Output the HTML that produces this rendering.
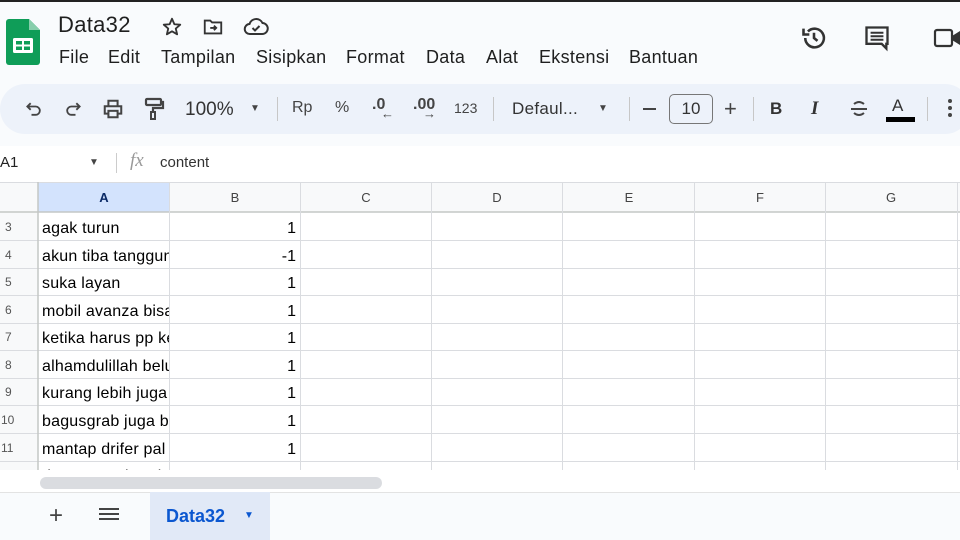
<!DOCTYPE html>
<html><head><meta charset="utf-8"><style>
*{margin:0;padding:0;box-sizing:border-box}
body{width:960px;height:540px;overflow:hidden;background:#f9fbfd;font-family:"Liberation Sans",Arial,sans-serif;position:relative;color:#1f1f1f}
.a{position:absolute;white-space:nowrap}
.m{position:absolute;top:47px;font-size:18px;color:#1f1f1f;letter-spacing:0.3px}
.tb{position:absolute;top:84px;left:0;width:970px;height:50px;background:#edf2fa;border-radius:25px}
.sep{position:absolute;top:97px;width:1px;height:24px;background:#c7c7c7}
.grid{position:absolute;left:0;top:182px;width:960px;height:288px;background:#fff;overflow:hidden}
</style></head><body>
<div class="a" style="left:0;top:0;width:960px;height:2px;background:#222"></div>
<svg class="a" style="left:6px;top:19px" width="34" height="46" viewBox="0 0 34 46"><path d="M3 0h20l11 11v32a3 3 0 0 1-3 3H3a3 3 0 0 1-3-3V3a3 3 0 0 1 3-3z" fill="#0f9d58"/><path d="M23 0v11h11z" fill="#87ceac"/><rect x="7" y="19" width="20" height="15" rx="1.5" fill="#fff"/><rect x="10" y="22" width="6" height="3.5" fill="#0f9d58"/><rect x="18" y="22" width="6" height="3.5" fill="#0f9d58"/><rect x="10" y="27.5" width="6" height="3.5" fill="#0f9d58"/><rect x="18" y="27.5" width="6" height="3.5" fill="#0f9d58"/></svg>
<div class="a" style="left:58px;top:12px;font-size:22px;letter-spacing:0.3px">Data32</div>
<svg class="a" style="left:161px;top:16px" width="22" height="22" viewBox="0 0 24 24"><path d="M12 3l2.6 6 6.4.5-4.9 4.2 1.5 6.3L12 16.7 6.4 20l1.5-6.3L3 9.5l6.4-.5z" fill="none" stroke="#333" stroke-width="2" stroke-linejoin="round"/></svg>
<svg class="a" style="left:202px;top:16px" width="22" height="22" viewBox="0 0 24 24"><path d="M3 5h6l2 2h10v12H3z" fill="none" stroke="#333" stroke-width="2"/><path d="M9 13h6m-2-2.5 2.5 2.5-2.5 2.5" fill="none" stroke="#333" stroke-width="2"/></svg>
<svg class="a" style="left:243px;top:16px" width="26" height="22" viewBox="0 0 26 22"><path d="M7 18a5 5 0 0 1-.5-10A7 7 0 0 1 19.5 7 5.5 5.5 0 0 1 19 18z" fill="none" stroke="#333" stroke-width="2"/><path d="M9.5 12l2.5 2.5 4.5-4.5" fill="none" stroke="#333" stroke-width="2"/></svg>
<div class="m" style="left:59px">File</div>
<div class="m" style="left:108px">Edit</div>
<div class="m" style="left:161px">Tampilan</div>
<div class="m" style="left:256px">Sisipkan</div>
<div class="m" style="left:346px">Format</div>
<div class="m" style="left:426px">Data</div>
<div class="m" style="left:486px">Alat</div>
<div class="m" style="left:539px">Ekstensi</div>
<div class="m" style="left:629px">Bantuan</div>
<svg class="a" style="left:800px;top:24px" width="28" height="28" viewBox="0 0 24 24"><path d="M4.5 12a8 8 0 1 0 2.3-5.6" fill="none" stroke="#333" stroke-width="2.2"/><path d="M3 4v5h5" fill="none" stroke="#333" stroke-width="2.2"/><path d="M12 7.5V12l3 2.5" fill="none" stroke="#333" stroke-width="2.2"/></svg>
<svg class="a" style="left:863px;top:24px" width="28" height="28" viewBox="0 0 24 24"><path d="M3 3h18v14h-1v4l-4-4H3z" fill="none" stroke="#333" stroke-width="2"/><path d="M6.5 7.5h11M6.5 10.5h11M6.5 13.5h11" stroke="#333" stroke-width="1.8"/></svg>
<svg class="a" style="left:933px;top:26px" width="27" height="24" viewBox="0 0 27 24"><rect x="2" y="4" width="17" height="16" rx="2" fill="none" stroke="#333" stroke-width="2.2"/><path d="M19 10l8-5v14l-8-5z" fill="#333"/></svg>
<div class="tb"></div>
<svg class="a" style="left:24px;top:99px" width="20" height="20" viewBox="0 0 24 24"><path d="M8 5 4 9l4 4" fill="none" stroke="#444" stroke-width="2.2"/><path d="M4 9h10a5 5 0 0 1 0 10H9" fill="none" stroke="#444" stroke-width="2.2"/></svg>
<svg class="a" style="left:63px;top:99px" width="20" height="20" viewBox="0 0 24 24"><path d="M16 5l4 4-4 4" fill="none" stroke="#444" stroke-width="2.2"/><path d="M20 9H10a5 5 0 0 0 0 10h5" fill="none" stroke="#444" stroke-width="2.2"/></svg>
<svg class="a" style="left:102px;top:98px" width="22" height="22" viewBox="0 0 24 24"><path d="M7 8V3h10v5M7 17H3V9h18v8h-4" fill="none" stroke="#444" stroke-width="2.2"/><rect x="7" y="14" width="10" height="7" fill="none" stroke="#444" stroke-width="2.2"/></svg>
<svg class="a" style="left:143px;top:97px" width="22" height="24" viewBox="0 0 22 24"><rect x="3" y="2" width="15" height="6" rx="1" fill="none" stroke="#444" stroke-width="2.2"/><path d="M18 5h2v6H10v4" fill="none" stroke="#444" stroke-width="2.2"/><rect x="8" y="15" width="4" height="7" fill="none" stroke="#444" stroke-width="2"/></svg>
<div class="a" style="left:185px;top:99px;font-size:19px;color:#333">100%</div>
<div class="a" style="left:250px;top:103px;font-size:10px;color:#444">▼</div>
<div class="sep" style="left:277px"></div>
<div class="a" style="left:292px;top:99px;font-size:16px;color:#444">Rp</div>
<div class="a" style="left:335px;top:99px;font-size:16px;color:#444">%</div>
<div class="a" style="left:372px;top:96px;font-size:16px;color:#444;font-weight:bold">.0</div>
<div class="a" style="left:381px;top:106px;font-size:13px;color:#444">←</div>
<div class="a" style="left:413px;top:96px;font-size:16px;color:#444;font-weight:bold">.00</div>
<div class="a" style="left:423px;top:106px;font-size:13px;color:#444">→</div>
<div class="a" style="left:454px;top:100px;font-size:14px;color:#444">123</div>
<div class="sep" style="left:493px"></div>
<div class="a" style="left:512px;top:99px;font-size:17px;color:#333;letter-spacing:0.3px">Defaul...</div>
<div class="a" style="left:598px;top:103px;font-size:10px;color:#444">▼</div>
<div class="sep" style="left:629px"></div>
<div class="a" style="left:643px;top:108px;width:13px;height:2px;background:#444"></div>
<div class="a" style="left:669px;top:94px;width:44px;height:30px;border:1px solid #777;border-radius:5px;font-size:17px;text-align:center;line-height:28px;color:#333">10</div>
<div class="a" style="left:724px;top:96px;font-size:22px;color:#444">+</div>
<div class="sep" style="left:753px"></div>
<div class="a" style="left:770px;top:99px;font-size:17px;font-weight:bold;color:#333">B</div>
<div class="a" style="left:811px;top:98px;font-size:19px;font-style:italic;font-family:'Liberation Serif',serif;font-weight:bold;color:#333">I</div>
<svg class="a" style="left:848px;top:98px" width="22" height="22" viewBox="0 0 22 22"><path d="M3 11h16" stroke="#444" stroke-width="2"/><path d="M6 6q5-4 10 0M6 15q5 4 10 0" fill="none" stroke="#444" stroke-width="2"/></svg>
<div class="a" style="left:892px;top:96px;font-size:17px;color:#333">A</div>
<div class="a" style="left:886px;top:117px;width:29px;height:5px;background:#000"></div>
<div class="sep" style="left:927px"></div>
<div class="a" style="left:948px;top:99px;width:4px;height:4px;border-radius:2px;background:#444;box-shadow:0 7px 0 #444,0 14px 0 #444"></div>
<div class="a" style="left:0;top:146px;width:960px;height:36px;background:#fff"></div>
<div class="a" style="left:0;top:154px;font-size:15px;color:#222">A1</div>
<div class="a" style="left:89px;top:157px;font-size:10px;color:#444">▼</div>
<div class="a" style="left:116px;top:153px;width:1px;height:20px;background:#ccc"></div>
<div class="a" style="left:130px;top:150px;font-size:19px;font-style:italic;color:#999;font-family:'Liberation Serif',serif">fx</div>
<div class="a" style="left:160px;top:154px;font-size:15px;color:#333">content</div>
<div class="grid">
<svg class="a" style="left:0;top:0" width="960" height="288">
<rect x="0" y="0" width="960" height="30" fill="#f8f9fa"/>
<rect x="38" y="0" width="131" height="30" fill="#d3e3fd"/>
<rect x="0" y="30" width="38" height="258" fill="#f8f9fa"/>
<g stroke="#dadce0" stroke-width="1">
<line x1="0" y1="0.5" x2="960" y2="0.5"/>
<line x1="0" y1="30" x2="960" y2="30" stroke="#c4c7c5" stroke-width="1.5"/>
<line x1="0" y1="58.5" x2="960" y2="58.5"/><line x1="0" y1="86.5" x2="960" y2="86.5"/><line x1="0" y1="113.5" x2="960" y2="113.5"/><line x1="0" y1="141.5" x2="960" y2="141.5"/><line x1="0" y1="168.5" x2="960" y2="168.5"/><line x1="0" y1="196.5" x2="960" y2="196.5"/><line x1="0" y1="223.5" x2="960" y2="223.5"/><line x1="0" y1="251.5" x2="960" y2="251.5"/><line x1="0" y1="279.5" x2="960" y2="279.5"/>
<line x1="38" y1="0" x2="38" y2="288" stroke="#c4c7c5" stroke-width="1.5"/>
<line x1="169.5" y1="0" x2="169.5" y2="288"/><line x1="300.5" y1="0" x2="300.5" y2="288"/><line x1="431.5" y1="0" x2="431.5" y2="288"/><line x1="562.5" y1="0" x2="562.5" y2="288"/><line x1="694.5" y1="0" x2="694.5" y2="288"/><line x1="825.5" y1="0" x2="825.5" y2="288"/><line x1="957.5" y1="0" x2="957.5" y2="288"/>
</g>
<g font-family="Liberation Sans, sans-serif" font-size="13" fill="#444" text-anchor="middle">
<text x="104" y="20" font-weight="bold" fill="#0b2a66">A</text><text x="235" y="20">B</text><text x="366" y="20">C</text><text x="497" y="20">D</text><text x="629" y="20">E</text><text x="760" y="20">F</text><text x="891" y="20">G</text>
</g>
<g font-family="Liberation Sans, sans-serif" font-size="12" fill="#555">
<text x="5" y="49">3</text><text x="5" y="77">4</text><text x="5" y="104">5</text><text x="5" y="132">6</text><text x="5" y="159">7</text><text x="5" y="187">8</text><text x="5" y="214">9</text><text x="1" y="242">10</text><text x="1" y="270">11</text><text x="1" y="297">12</text>
</g>
<g font-family="Liberation Sans, sans-serif" font-size="16" fill="#000">
<text x="296" y="51" text-anchor="end">1</text><text x="296" y="79" text-anchor="end">-1</text><text x="296" y="106" text-anchor="end">1</text><text x="296" y="134" text-anchor="end">1</text><text x="296" y="161" text-anchor="end">1</text><text x="296" y="189" text-anchor="end">1</text><text x="296" y="216" text-anchor="end">1</text><text x="296" y="244" text-anchor="end">1</text><text x="296" y="272" text-anchor="end">1</text><text x="296" y="299" text-anchor="end">1</text>
</g>
<svg x="39" y="31" width="130" height="280"><g font-family="Liberation Sans, sans-serif" font-size="16" fill="#000" letter-spacing="0.2">
<text x="3" y="20">agak turun</text><text x="3" y="48">akun tiba tanggung</text><text x="3" y="75">suka layan</text><text x="3" y="103">mobil avanza bisa</text><text x="3" y="130">ketika harus pp ke</text><text x="3" y="158">alhamdulillah belum</text><text x="3" y="185">kurang lebih juga</text><text x="3" y="213">bagusgrab juga baik</text><text x="3" y="241">mantap drifer pal</text><text x="3" y="268">dengan grabperi</text>
</g></svg>
</svg>
</div>
<div class="a" style="left:0;top:470px;width:960px;height:22px;background:#fff"></div>
<div class="a" style="left:40px;top:477px;width:342px;height:12px;border-radius:6px;background:#dadce0"></div>
<div class="a" style="left:0;top:492px;width:960px;height:1px;background:#e3e3e3"></div>
<div class="a" style="left:49px;top:502px;font-size:24px;color:#444">+</div>
<div class="a" style="left:99px;top:508px;width:20px;height:2px;background:#444;box-shadow:0 5px 0 #444,0 10px 0 #444"></div>
<div class="a" style="left:150px;top:492px;width:120px;height:48px;background:#e1e9f7"></div>
<div class="a" style="left:166px;top:506px;font-size:18px;font-weight:bold;color:#0b57d0">Data32</div>
<div class="a" style="left:244px;top:510px;font-size:10px;color:#0b57d0">▼</div>
</body></html>
